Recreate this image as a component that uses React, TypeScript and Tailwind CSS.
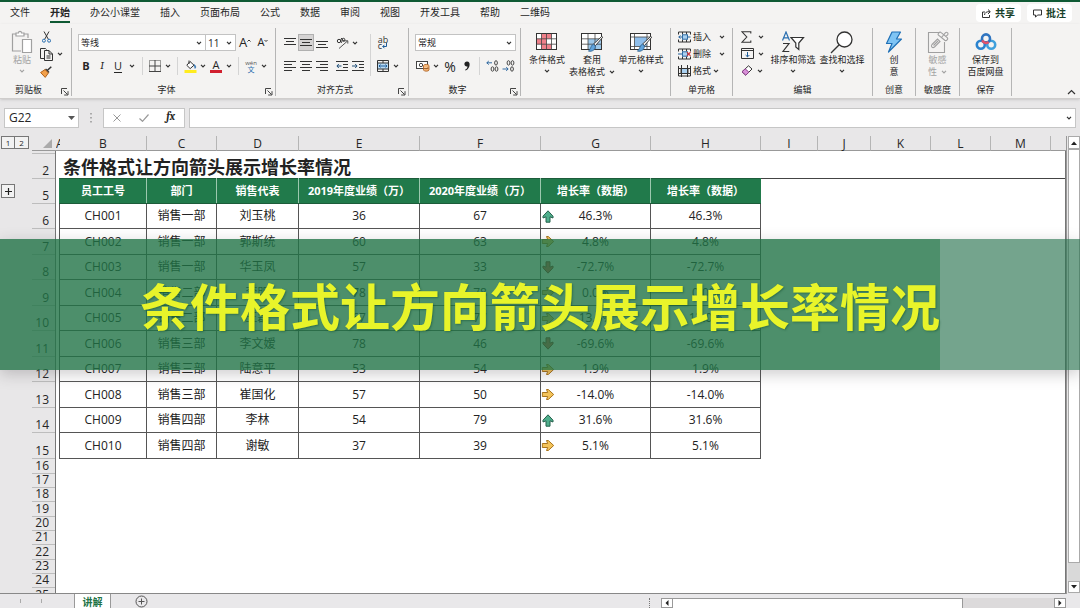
import { useState } from 'react';
import type { ReactNode } from 'react';

type Trend = 'up' | 'flat' | 'down';

interface Sale {
  id: string;
  dept: string;
  name: string;
  y2019: number;
  y2020: number;
  growth: string;
  trend: Trend;
}

const tabs = ['文件', '开始', '办公小课堂', '插入', '页面布局', '公式', '数据', '审阅', '视图', '开发工具', '帮助', '二维码'];

const sales: Sale[] = [
  { id: 'CH001', dept: '销售一部', name: '刘玉桃', y2019: 36, y2020: 67, growth: '46.3%', trend: 'up' },
  { id: 'CH002', dept: '销售一部', name: '郭斯统', y2019: 60, y2020: 63, growth: '4.8%', trend: 'flat' },
  { id: 'CH003', dept: '销售一部', name: '华玉凤', y2019: 57, y2020: 33, growth: '-72.7%', trend: 'down' },
  { id: 'CH004', dept: '销售二部', name: '李明', y2019: 78, y2020: 78, growth: '0.0%', trend: 'flat' },
  { id: 'CH005', dept: '销售二部', name: '王磊', y2019: 67, y2020: 77, growth: '13.0%', trend: 'flat' },
  { id: 'CH006', dept: '销售三部', name: '李文嫒', y2019: 78, y2020: 46, growth: '-69.6%', trend: 'down' },
  { id: 'CH007', dept: '销售三部', name: '陆意平', y2019: 53, y2020: 54, growth: '1.9%', trend: 'flat' },
  { id: 'CH008', dept: '销售三部', name: '崔国化', y2019: 57, y2020: 50, growth: '-14.0%', trend: 'flat' },
  { id: 'CH009', dept: '销售四部', name: '李林', y2019: 54, y2020: 79, growth: '31.6%', trend: 'up' },
  { id: 'CH010', dept: '销售四部', name: '谢敏', y2019: 37, y2020: 39, growth: '5.1%', trend: 'flat' },
];

const headings = ['员工工号', '部门', '销售代表', '2019年度业绩（万）', '2020年度业绩（万）', '增长率（数据）', '增长率（数据）'];

const columns = [
  { name: 'B', width: 'w-[87px]' },
  { name: 'C', width: 'w-[70px]' },
  { name: 'D', width: 'w-[82px]' },
  { name: 'E', width: 'w-[121px]' },
  { name: 'F', width: 'w-[121px]' },
  { name: 'G', width: 'w-[110px]' },
  { name: 'H', width: 'w-[110px]' },
  { name: 'I', width: 'w-[57px]' },
  { name: 'J', width: 'w-[53px]' },
  { name: 'K', width: 'w-[60px]' },
  { name: 'L', width: 'w-[60px]' },
  { name: 'M', width: 'w-[60px]' },
];

const tallRows = [6, 7, 8, 9, 10, 11, 12, 13, 14, 15];
const shortRows = [16, 17, 18, 19, 20, 21, 22, 23, 24, 25];

function Caret({ light = false }: { light?: boolean }) {
  return (
    <svg width="6" height="4" viewBox="0 0 6 4" fill="none" stroke={light ? '#a3a3a3' : '#333'} strokeWidth="1.2" className="shrink-0">
      <path d="M1 0.8 3 2.9 5 0.8" />
    </svg>
  );
}

function Launcher() {
  return (
    <svg width="8" height="8" viewBox="0 0 8 8" fill="none" stroke="#444" strokeWidth="1">
      <path d="M0.5 6V0.5H6M2.5 2.5 6.5 6.5M7 3.2V7H3.2" />
    </svg>
  );
}

function Group({ label, width, launcher = false, children }: { label: string; width: string; launcher?: boolean; children: ReactNode }) {
  return (
    <section aria-label={label} className={`${width} relative flex shrink-0 flex-col border-r border-[#b5b5b5]`}>
      <div className="flex h-14">{children}</div>
      <div className={`text-center text-[9px] leading-3 ${launcher ? 'pr-3.5' : ''}`}>{label}</div>
      {launcher && (
        <button aria-label={`${label}设置`} className="absolute right-0.5 bottom-0">
          <Launcher />
        </button>
      )}
    </section>
  );
}

function Tool({ label, className = '', children }: { label: string; className?: string; children: ReactNode }) {
  return (
    <button aria-label={label} className={`flex h-full shrink-0 items-center justify-center ${className}`}>
      {children}
    </button>
  );
}

function BigTool({ lines, className, caret, muted = false, children }: {
  lines: string[];
  className: string;
  caret?: 'below' | 'inline';
  muted?: boolean;
  children: ReactNode;
}) {
  return (
    <button className={`${className} ${muted ? 'text-[#a3a3a3]' : ''} flex shrink-0 flex-col items-center pt-0.5 text-[9px] leading-3 whitespace-nowrap`}>
      <span className="flex h-6 items-center">{children}</span>
      {lines.map((line, i) => (
        <span key={line} className="flex items-center gap-1">
          {line}
          {caret === 'inline' && i === lines.length - 1 && <Caret light={muted} />}
        </span>
      ))}
      {caret === 'below' && (
        <span className="flex h-2.5 items-center">
          <Caret light={muted} />
        </span>
      )}
    </button>
  );
}

function Divider() {
  return <span className="mx-1 h-full w-px shrink-0 bg-[#d4d4d4]" />;
}

function Lines({ rows }: { rows: [number, number, number][] }) {
  return (
    <svg width="12" height="12" viewBox="0 0 12 12" stroke="#333" strokeWidth="1">
      {rows.map(([x1, x2, y]) => (
        <path key={y} d={`M${x1} ${y}H${x2}`} />
      ))}
    </svg>
  );
}

function IndentIcon({ out = false }: { out?: boolean }) {
  return (
    <svg width="12" height="12" viewBox="0 0 12 12" fill="none" stroke="#333" strokeWidth="1">
      <path d="M0 1.5H12M7 4.5H12M7 7.5H12M0 10.5H12" />
      <path d={out ? 'M5.5 6H1M2.8 4 0.9 6 2.8 8' : 'M0 6H5M3.2 4 5.1 6 3.2 8'} stroke="#1e4e79" />
    </svg>
  );
}

function GridIcon({ kind }: { kind: 'cond' | 'table' | 'cell' }) {
  return (
    <svg width="24" height="22" viewBox="0 0 24 22" fill="none">
      <rect x="1.5" y="2.5" width="20" height="16" fill="#fff" />
      {kind === 'cond' && <path d="M6.5 2.5H16.5V7.8H6.5ZM1.5 7.8H11.5V13.2H1.5ZM11.5 13.2H16.5V18.5H6.5V13.2Z" fill="#f0808a" />}
      {kind === 'table' && <path d="M8 8H21.5V18.5H8Z" fill="#9cc8ea" />}
      {kind === 'cell' && <path d="M5.5 6H18V15.5H5.5Z" fill="#8fbfec" />}
      <rect x="1.5" y="2.5" width="20" height="16" stroke="#333" />
      {kind === 'cond' && <path d="M6.5 2.5V18.5M11.5 2.5V18.5M16.5 2.5V18.5M1.5 7.8H21.5M1.5 13.2H21.5" stroke="#444" strokeWidth="0.8" />}
      {kind === 'table' && <path d="M8 2.5V18.5M15 2.5V18.5M1.5 7.8H21.5M1.5 13.2H21.5" stroke="#444" strokeWidth="0.8" />}
      {kind === 'cell' && <path d="M5.5 2.5V18.5M18 2.5V18.5M1.5 6H21.5M1.5 15.5H21.5" stroke="#444" strokeWidth="0.8" />}
      {kind !== 'cond' && (
        <>
          <path d="M22.8 6.2 15.5 14.6 13.6 13 21.6 5.5Z" fill="#f4f3f2" stroke="#333" strokeWidth="0.9" />
          <path d="M13.4 13.2C11.2 13.6 11.4 17 8.5 20.2 12 21 15.6 18.6 15.4 14.9Z" fill="#5fa3dc" stroke="#2f5f8a" strokeWidth="0.8" />
        </>
      )}
    </svg>
  );
}

function CellsIcon({ kind }: { kind: 'insert' | 'delete' | 'format' }) {
  return (
    <svg width="13" height="12" viewBox="0 0 13 12" fill="none" stroke="#333" strokeWidth="1">
      {kind === 'format' ? (
        <>
          <rect x="3" y="3.5" width="7" height="5" fill="#a9d0f0" />
          <path d="M0.5 1V11H12.5V1M3.5 0V12M9.5 0V12M0.5 3.5H12.5M0.5 8.5H12.5" />
        </>
      ) : (
        <>
          <path d="M0.5 3.5V1H12.5V3.5M0.5 8.5V11H12.5V8.5M4.5 1V3.5M8.5 1V3.5M4.5 8.5V11M8.5 8.5V11" />
          <rect x="4.5" y="3.8" width="5" height="4.4" fill="#a9d0f0" stroke="#2f6ca5" />
          {kind === 'insert' && <path d="M4 6H0.8M2.4 4.4 0.8 6 2.4 7.6M10 6H12.5" stroke="#1e5c99" />}
          {kind === 'delete' && <path d="M0 6H4" stroke="#1e5c99" />}
          {kind === 'delete' && <path d="M9 4.2 12.5 7.8M12.5 4.2 9 7.8" stroke="#d13438" strokeWidth="1.2" />}
        </>
      )}
    </svg>
  );
}

function DecimalIcon({ more = false }: { more?: boolean }) {
  return (
    <svg width="13" height="12" viewBox="0 0 13 12" fill="none" strokeWidth="0.9">
      {more ? (
        <>
          <path d="M6 2.8H0.8M2.8 1 0.8 2.8 2.8 4.6" stroke="#1e5c99" />
          <g stroke="#333">
            <ellipse cx="10" cy="2.9" rx="1.4" ry="2.2" />
            <ellipse cx="6.5" cy="9" rx="1.4" ry="2.2" />
            <ellipse cx="10.5" cy="9" rx="1.4" ry="2.2" />
          </g>
        </>
      ) : (
        <>
          <path d="M0.5 9H6M4.2 7.2 6.2 9 4.2 10.8" stroke="#1e5c99" />
          <g stroke="#333">
            <ellipse cx="6.5" cy="2.9" rx="1.4" ry="2.2" />
            <ellipse cx="10.5" cy="2.9" rx="1.4" ry="2.2" />
            <ellipse cx="10" cy="9" rx="1.4" ry="2.2" />
          </g>
        </>
      )}
    </svg>
  );
}

function TrendIcon({ trend }: { trend: Trend }) {
  const look = {
    up: { fill: '#4fae8c', stroke: '#24614c', turn: '' },
    flat: { fill: '#f3c35a', stroke: '#a9741c', turn: 'rotate-90' },
    down: { fill: '#d9534a', stroke: '#7d2b22', turn: 'rotate-180' },
  }[trend];
  return (
    <svg width="12" height="13" viewBox="0 0 12 13" className={look.turn}>
      <path d="M6 0.8 11 6.2V8L8 6.8V12.2H4V6.8L1 8V6.2Z" fill={look.fill} stroke={look.stroke} strokeWidth="1" strokeLinejoin="round" />
    </svg>
  );
}

function ClipboardGroup() {
  return (
    <Group label="剪贴板" width="w-[72px]" launcher>
      <BigTool lines={['粘贴']} className="ml-1.5 w-8" caret="below" muted>
        <svg width="22" height="24" viewBox="0 0 22 24" fill="none" stroke="#a0a0a0" strokeWidth="1.2">
          <path d="M10 21H1.5V4H5M13 4H17V8" />
          <path d="M5 6V3H7.5C7.5 0.8 10.5 0.8 10.5 3H13V6Z" fill="#fff" />
          <path d="M11.5 9.5H20.5V22.5H11.5Z" fill="#fff" />
        </svg>
      </BigTool>
      <div className="flex flex-col">
        <div className="flex h-[17px]">
          <Tool label="剪切" className="w-4">
            <svg width="9" height="12" viewBox="0 0 9 12" fill="none" strokeWidth="1">
              <path d="M2 0.5 6.2 8M7 0.5 2.8 8" stroke="#333" />
              <circle cx="1.9" cy="9.7" r="1.5" stroke="#2a6fb0" />
              <circle cx="7.1" cy="9.7" r="1.5" stroke="#2a6fb0" />
            </svg>
          </Tool>
        </div>
        <div className="flex h-[18px]">
          <Tool label="复制" className="w-4">
            <svg width="13" height="13" viewBox="0 0 13 13" fill="none" stroke="#333" strokeWidth="1">
              <path d="M4 10.5H0.5V0.5H5.5L6.5 1.5" />
              <path d="M4.5 2.5H9L12.5 6V12.5H4.5ZM9 2.5V6H12.5M6.5 8H10.5M6.5 10H10.5" />
            </svg>
          </Tool>
          <Tool label="复制选项" className="w-3">
            <Caret />
          </Tool>
        </div>
        <div className="flex h-[17px]">
          <Tool label="格式刷" className="w-4">
            <svg width="12" height="12" viewBox="0 0 12 12" fill="none" strokeWidth="1">
              <path d="M11.3 0.7 7.5 4.2M5.5 3 9 6.5" stroke="#333" strokeWidth="1.5" />
              <path d="M5 3.6 0.6 6.5 5.2 11.4 8.4 7Z" fill="#f2a04a" stroke="#b3621b" />
            </svg>
          </Tool>
        </div>
      </div>
    </Group>
  );
}

function FontGroup() {
  return (
    <Group label="字体" width="w-[204px]" launcher>
      <div className="flex flex-col gap-1.5 pt-1.5 pl-1.5">
        <div className="flex h-[17px] items-center">
          <div className="relative h-full">
            <select aria-label="字体名称" className="block h-full w-32 appearance-none border border-[#c3c3c3] bg-white pl-0.5 text-[9px] leading-3">
              <option>等线</option>
            </select>
            <span className="pointer-events-none absolute inset-y-0 right-1 flex items-center"><Caret /></span>
          </div>
          <div className="relative h-full">
            <select aria-label="字号" className="block h-full w-[30px] appearance-none border border-l-0 border-[#c3c3c3] bg-white pl-0.5 text-[10px] leading-3">
              <option>11</option>
            </select>
            <span className="pointer-events-none absolute inset-y-0 right-1 flex items-center"><Caret /></span>
          </div>
          <Tool label="增大字号" className="w-[18px] text-[13px]">
            A
            <svg width="4" height="8" viewBox="0 0 4 8" fill="none" stroke="#333"><path d="M0.5 2.5 2 1 3.5 2.5" /></svg>
          </Tool>
          <Tool label="减小字号" className="w-[18px] text-[11px]">
            A
            <svg width="4" height="8" viewBox="0 0 4 8" fill="none" stroke="#333"><path d="M0.5 1 2 2.5 3.5 1" /></svg>
          </Tool>
        </div>
        <div className="flex h-[18px] items-center text-[11px]">
          <Tool label="加粗" className="w-4 font-bold">B</Tool>
          <Tool label="倾斜" className="w-4 font-serif italic">I</Tool>
          <Tool label="下划线" className="w-4 underline underline-offset-2">U</Tool>
          <Tool label="下划线选项" className="w-3"><Caret /></Tool>
          <Divider />
          <Tool label="边框" className="w-4">
            <svg width="12" height="12" viewBox="0 0 12 12" fill="none" stroke="#444">
              <path d="M0.5 0.5H11.5V11.5H0.5Z" strokeDasharray="1 1" />
              <path d="M6 0V12M0 6H12M0 11.5H12" />
            </svg>
          </Tool>
          <Tool label="边框选项" className="w-2.5"><Caret /></Tool>
          <Divider />
          <Tool label="填充颜色" className="w-4">
            <svg width="13" height="13" viewBox="0 0 13 13" fill="none">
              <path d="M6 1.5 10 5.2 6.2 8.6 2.8 5.3Z" fill="#fff" stroke="#333" />
              <path d="M5 0.5V4" stroke="#333" />
              <path d="M10.3 4.5C12 6 12 7.6 11 8.4Z" fill="#2a6fb0" stroke="#2a6fb0" strokeWidth="0.7" />
              <rect x="0.5" y="10" width="12" height="3" fill="#ffec1f" />
            </svg>
          </Tool>
          <Tool label="填充颜色选项" className="w-2.5"><Caret /></Tool>
          <Tool label="字体颜色" className="w-4">
            <span className="flex w-3 flex-col items-center text-[11px] leading-[10px]">
              A
              <span className="h-[3px] w-3 bg-[#d1202f]" />
            </span>
          </Tool>
          <Tool label="字体颜色选项" className="w-2.5"><Caret /></Tool>
          <Divider />
          <Tool label="拼音" className="w-4">
            <span className="flex flex-col items-center text-[6px] leading-[6px] text-[#555]">
              wén
              <span className="text-[7px] leading-[7px] text-[#2a6fb0]">文</span>
            </span>
          </Tool>
          <Tool label="拼音选项" className="w-2.5"><Caret /></Tool>
        </div>
      </div>
    </Group>
  );
}

function AlignGroup() {
  return (
    <Group label="对齐方式" width="w-[133px]" launcher>
      <div className="flex flex-col gap-1.5 pt-1.5 pl-1.5">
        <div className="flex h-[17px] items-center">
          <Tool label="顶端对齐" className="w-4"><Lines rows={[[0, 12, 1.5], [2, 10, 4.5], [0, 12, 7.5]]} /></Tool>
          <Tool label="垂直居中" className="w-4 border border-[#b0b0b0] bg-[#d5d3d3]"><Lines rows={[[0, 12, 2.5], [2, 10, 5.5], [0, 12, 8.5]]} /></Tool>
          <Tool label="底端对齐" className="w-4"><Lines rows={[[0, 12, 4.5], [2, 10, 7.5], [0, 12, 10.5]]} /></Tool>
          <Tool label="方向" className="ml-1 w-4">
            <svg width="13" height="12" viewBox="0 0 13 12" fill="none" stroke="#333">
              <circle cx="3" cy="4" r="1.7" />
              <path d="M4.2 2.4 5.6 5.8M5 1 8.2 4.5" />
              <circle cx="7.4" cy="2.8" r="1.5" />
              <path d="M3 11.5 11.5 4M8.8 3.8H11.8V6.6" stroke="#555" />
            </svg>
          </Tool>
          <Tool label="方向选项" className="w-2.5"><Caret /></Tool>
        </div>
        <div className="flex h-[18px] items-center">
          <Tool label="左对齐" className="w-4"><Lines rows={[[0, 12, 1.5], [0, 8, 4.5], [0, 12, 7.5], [0, 8, 10.5]]} /></Tool>
          <Tool label="居中" className="w-4"><Lines rows={[[0, 12, 1.5], [2, 10, 4.5], [0, 12, 7.5], [2, 10, 10.5]]} /></Tool>
          <Tool label="右对齐" className="w-4"><Lines rows={[[0, 12, 1.5], [4, 12, 4.5], [0, 12, 7.5], [4, 12, 10.5]]} /></Tool>
          <Tool label="减少缩进量" className="ml-1 w-4"><IndentIcon out /></Tool>
          <Tool label="增加缩进量" className="w-4"><IndentIcon /></Tool>
        </div>
      </div>
      <div className="flex pt-1.5 pb-2">
        <Divider />
      </div>
      <div className="flex flex-col gap-1.5 pt-1.5">
        <div className="flex h-[17px] items-center">
          <Tool label="自动换行" className="w-4">
            <span className="flex flex-col items-start text-[9px] leading-[6px] text-[#333]">
              ab
              <span className="flex items-center">
                c
                <svg width="6" height="6" viewBox="0 0 6 6" fill="none" stroke="#1e5c99"><path d="M4.5 0V3.5H0.8M2.4 1.8 0.8 3.5 2.4 5.2" /></svg>
              </span>
            </span>
          </Tool>
        </div>
        <div className="flex h-[18px] items-center">
          <Tool label="合并后居中" className="w-4">
            <svg width="12" height="12" viewBox="0 0 12 12" fill="none" stroke="#333">
              <path d="M0.5 0.5H11.5V11.5H0.5ZM6 0.5V3M6 9V11.5" />
              <path d="M0.5 3H11.5V9H0.5Z" fill="#b9dbf5" />
              <path d="M2 6H10M3.5 4.6 2 6 3.5 7.4M8.5 4.6 10 6 8.5 7.4" stroke="#1e5c99" />
            </svg>
          </Tool>
          <Tool label="合并选项" className="w-2.5"><Caret /></Tool>
        </div>
      </div>
    </Group>
  );
}

function NumberGroup() {
  return (
    <Group label="数字" width="w-[112px]" launcher>
      <div className="flex flex-col gap-1.5 pt-1.5 pl-1.5">
        <div className="relative h-[17px]">
          <select aria-label="数字格式" className="block h-full w-[101px] appearance-none border border-[#c3c3c3] bg-white pl-0.5 text-[9px] leading-3">
            <option>常规</option>
          </select>
          <span className="pointer-events-none absolute inset-y-0 right-1 flex items-center"><Caret /></span>
        </div>
        <div className="flex h-[18px] items-center">
          <Tool label="会计数字格式" className="w-4">
            <svg width="14" height="12" viewBox="0 0 14 12" fill="none">
              <rect x="0.5" y="1.5" width="11" height="7" fill="#fff" stroke="#444" />
              <circle cx="5" cy="5" r="1.7" stroke="#444" />
              <path d="M7.5 5.5C7.5 4 13 4 13 5.5V10C13 11.6 7.5 11.6 7.5 10ZM7.5 7.8C8 9 12.5 9 13 7.8" fill="#f6b878" stroke="#a8591a" strokeWidth="0.8" />
            </svg>
          </Tool>
          <Tool label="会计数字格式选项" className="w-2.5"><Caret /></Tool>
          <Tool label="百分比样式" className="w-[18px] text-[14px]">%</Tool>
          <Tool label="千位分隔样式" className="w-4">
            <svg width="6" height="10" viewBox="0 0 6 10" fill="#222"><path d="M3 0.5C5 0.5 5.8 2 5.6 4 5.4 6.5 4 8.6 1.5 9.6L1 8.8C2.6 8 3.4 6.8 3.5 5.4 1.8 5.8 0.4 4.7 0.4 3 0.4 1.5 1.5 0.5 3 0.5Z" /></svg>
          </Tool>
          <Divider />
          <Tool label="增加小数位数" className="w-4"><DecimalIcon more /></Tool>
          <Tool label="减少小数位数" className="w-4"><DecimalIcon /></Tool>
        </div>
      </div>
    </Group>
  );
}

function Ribbon() {
  return (
    <div className="flex h-[75px] shrink-0 border-b border-[#cfcdcc] bg-[#f4f3f2] pt-1 pb-0.5 shadow-sm">
      <ClipboardGroup />
      <FontGroup />
      <AlignGroup />
      <NumberGroup />
      <Group label="样式" width="w-[150px]">
        <BigTool lines={['条件格式']} className="ml-1 w-11" caret="below"><GridIcon kind="cond" /></BigTool>
        <BigTool lines={['套用', '表格格式']} className="w-[46px]" caret="inline"><GridIcon kind="table" /></BigTool>
        <BigTool lines={['单元格样式']} className="w-[52px]" caret="below"><GridIcon kind="cell" /></BigTool>
      </Group>
      <Group label="单元格" width="w-[62px]">
        <div className="flex flex-col pl-[7px] text-[9px] leading-3">
          <button className="flex h-[17px] items-center gap-0.5"><CellsIcon kind="insert" />插入<span className="pl-1.5"><Caret /></span></button>
          <button className="flex h-[17px] items-center gap-0.5"><CellsIcon kind="delete" />删除<span className="pl-1.5"><Caret /></span></button>
          <button className="flex h-[17px] items-center gap-0.5"><CellsIcon kind="format" />格式<Caret /></button>
        </div>
      </Group>
      <Group label="编辑" width="w-[140px]">
        <div className="flex w-9 flex-col pl-2">
          <button aria-label="自动求和" className="flex h-[17px] items-center gap-1.5">
            <svg width="11" height="12" viewBox="0 0 11 12" fill="none" stroke="#333" strokeWidth="1.1"><path d="M9.8 2.6V0.8H1L5.8 6 1 11.2H9.8V9.4" /></svg>
            <Caret />
          </button>
          <button aria-label="填充" className="flex h-[17px] items-center gap-1">
            <svg width="13" height="11" viewBox="0 0 13 11" fill="none" stroke="#333">
              <path d="M0.5 0.5H12.5V10.5H0.5ZM0.5 2.5H12.5" />
              <path d="M6.5 4V8.8M4.6 7 6.5 8.9 8.4 7" stroke="#1e5c99" />
            </svg>
            <Caret />
          </button>
          <button aria-label="清除" className="flex h-[17px] items-center gap-1">
            <svg width="12" height="11" viewBox="0 0 12 11" fill="none" stroke="#333">
              <path d="M7.5 0.8 11 4 4.8 10.2 1 6.8Z" fill="#fff" />
              <path d="M4.2 3.8 7.9 7.2 4.8 10.2 1 6.8Z" fill="#d890d8" stroke="#8b3f8b" />
            </svg>
            <Caret />
          </button>
        </div>
        <BigTool lines={['排序和筛选']} className="w-12" caret="below">
          <svg width="24" height="22" viewBox="0 0 24 22" fill="none" strokeWidth="1.2">
            <path d="M1.5 9.5 5 1 8.5 9.5M2.7 6.8H7.3" stroke="#2a6fb0" />
            <path d="M2 12.5H8L2 20.5H8.3" stroke="#333" />
            <path d="M10 6.5H22.5L17.8 12V18.5L14.8 16V12Z" fill="#fff" stroke="#333" />
          </svg>
        </BigTool>
        <BigTool lines={['查找和选择']} className="w-[50px]" caret="below">
          <svg width="24" height="23" viewBox="0 0 24 23" fill="none" stroke="#333" strokeWidth="1.3">
            <circle cx="14.5" cy="8.5" r="7.5" fill="#fff" />
            <path d="M9.2 13.8 1 22" />
          </svg>
        </BigTool>
      </Group>
      <Group label="创意" width="w-[43px]">
        <BigTool lines={['创', '意']} className="w-full">
          <svg width="18" height="22" viewBox="0 0 18 22" fill="#7fc4f4" stroke="#1f6fb5" strokeWidth="1.2" strokeLinejoin="round">
            <path d="M7 1H15.5L11.5 8H16.5L3.5 21 7 12.5H1.5Z" />
          </svg>
        </BigTool>
      </Group>
      <Group label="敏感度" width="w-[44px]">
        <BigTool lines={['敏感', '性']} className="w-full" caret="inline" muted>
          <svg width="22" height="22" viewBox="0 0 22 22" fill="none" stroke="#a0a0a0" strokeWidth="1.1">
            <path d="M12 1.5H1.5V21.5H17.5V11" />
            <path d="M5 13.5 10.5 8 13 10.5 7.5 16C5.5 17.5 3.5 15.5 5 13.5ZM6.5 14.5 11 10" />
            <path d="M11.5 4.2C10.3 2.8 12.6 0.2 14.2 1.6L20.2 6.6C21.6 8.2 19.4 10.4 17.8 9.2ZM14.5 6.5 18.3 1.8C19.6 0.4 21.8 2 20.6 3.8L18.8 5.4" />
          </svg>
        </BigTool>
      </Group>
      <Group label="保存" width="w-[52px]">
        <BigTool lines={['保存到', '百度网盘']} className="w-full">
          <svg width="22" height="20" viewBox="0 0 22 20" fill="none" strokeWidth="2.6">
            <circle cx="5.8" cy="12.8" r="4" stroke="#2a83cf" />
            <circle cx="16.2" cy="12.8" r="4" stroke="#3fa0dc" />
            <circle cx="11" cy="6.4" r="4" stroke="#2f74c0" />
            <path d="M7.2 8.4C8.6 10.8 11.4 12 13.6 9.8" stroke="#e2536a" />
          </svg>
        </BigTool>
      </Group>
      <div className="flex flex-1 items-end justify-end pr-1 pb-px">
        <button aria-label="折叠功能区">
          <svg width="9" height="6" viewBox="0 0 9 6" fill="none" stroke="#333" strokeWidth="1.2"><path d="M1 5 4.5 1.5 8 5" /></svg>
        </button>
      </div>
    </div>
  );
}

function TabBar() {
  const [active, setActive] = useState('开始');
  return (
    <nav className="flex h-[24px] shrink-0 items-center border-t-2 border-[#0f5a34] bg-[#f4f3f2] pr-2 pl-2.5">
      <div className="flex flex-1 gap-5 text-[10px]">
        {tabs.map((tab) => (
          <button
            key={tab}
            onClick={() => setActive(tab)}
            className={`border-b-2 leading-[18px] whitespace-nowrap ${tab === active ? 'border-[#0f5a34] font-bold' : 'border-transparent'}`}
          >
            {tab}
          </button>
        ))}
      </div>
      <div className="flex gap-1.5 text-[10px] font-bold text-[#173f2a]">
        <button className="flex h-[18px] items-center gap-1 rounded-sm bg-white px-1.5">
          <svg width="9" height="9" viewBox="0 0 9 9" fill="none" stroke="#333"><path d="M3 3H0.5V8.5H7.5V6M2.5 6C2.8 3.5 4.5 2.5 8 2.7M6 0.5 8.3 2.7 6 5" /></svg>
          共享
        </button>
        <button className="flex h-[18px] items-center gap-1 rounded-sm bg-white px-1.5">
          <svg width="9" height="9" viewBox="0 0 9 9" fill="none" stroke="#333"><path d="M0.5 1H8.5V6H4.5L2.5 8.2V6H0.5Z" /></svg>
          批注
        </button>
      </div>
    </nav>
  );
}

function FormulaBar() {
  return (
    <div className="flex h-[37px] shrink-0 items-center pr-1 pl-1 text-xs">
      <div className="relative">
        <input aria-label="名称框" defaultValue="G22" className="block h-5 w-[75px] border border-[#c6c6c6] bg-white pl-1 text-xs" />
        <svg width="7" height="4" viewBox="0 0 7 4" className="pointer-events-none absolute top-2 right-1"><path d="M0 0H7L3.5 4Z" fill="#555" /></svg>
      </div>
      <svg width="2" height="10" viewBox="0 0 2 10" className="mx-[11px]" fill="#aaa">
        <path d="M0 0H2V1.5H0ZM0 4H2V5.5H0ZM0 8H2V9.5H0Z" />
      </svg>
      <div className="flex h-5 w-[82px] items-center justify-around border border-[#c6c6c6] bg-white">
        <button aria-label="取消">
          <svg width="8" height="8" viewBox="0 0 8 8" stroke="#999"><path d="M0.5 0.5 7.5 7.5M7.5 0.5 0.5 7.5" /></svg>
        </button>
        <button aria-label="输入">
          <svg width="10" height="8" viewBox="0 0 10 8" fill="none" stroke="#999" strokeWidth="1.2"><path d="M0.5 4.5 3.5 7.3 9.5 0.5" /></svg>
        </button>
        <button aria-label="插入函数" className="font-serif text-[11px] font-bold italic">fx</button>
      </div>
      <div className="relative ml-1 flex-1">
        <input aria-label="编辑栏" className="block h-5 w-full border border-[#c6c6c6] bg-white px-1" />
        <span className="pointer-events-none absolute inset-y-0 right-1 flex items-center"><Caret /></span>
      </div>
    </div>
  );
}

function RowHeaders() {
  const cell = 'flex items-end justify-end border-b border-[#bdbdbd] pr-1.5 text-xs leading-[15px]';
  return (
    <div className="w-6 shrink-0 border-r border-[#777]">
      <div className="h-[3px] border-b border-[#bdbdbd]" />
      <div className={`${cell} h-[25px]`}>2</div>
      <div className={`${cell} h-[25px]`}>5</div>
      {tallRows.map((n) => (
        <div key={n} className={`${cell} h-[26px] even:h-[25px]`}>{n}</div>
      ))}
      <div>
        {shortRows.map((n) => (
          <div key={n} className={`${cell} h-[14px] [&:nth-child(3n+1)]:h-[15px]`}>{n}</div>
        ))}
      </div>
    </div>
  );
}

function SalesTable() {
  return (
    <table className="w-[702px] table-fixed border-collapse text-center text-xs leading-4">
      <colgroup>
        {columns.slice(0, 7).map((col) => (
          <col key={col.name} className={col.width} />
        ))}
      </colgroup>
      <thead>
        <tr className="h-[25px] bg-[#217a4b] text-[11px] text-white">
          {headings.map((text, i) => (
            <th key={i} className="border border-x-[#9cc8ae] border-y-[#1d5c3a] p-0 font-bold whitespace-nowrap first:border-l-[#217a4b] last:border-r-[#217a4b]">
              {text}
            </th>
          ))}
        </tr>
      </thead>
      <tbody className="text-[#222] [&_td]:border [&_td]:border-[#555] [&_td]:p-0">
        {sales.map((row) => (
          <tr key={row.id} className="h-[25px] even:h-[26px]">
            <td>{row.id}</td>
            <td>{row.dept}</td>
            <td>{row.name}</td>
            <td>{row.y2019}</td>
            <td>{row.y2020}</td>
            <td className="relative">
              <span className="absolute top-1.5 left-px"><TrendIcon trend={row.trend} /></span>
              {row.growth}
            </td>
            <td>{row.growth}</td>
          </tr>
        ))}
      </tbody>
    </table>
  );
}

function ScrollArrow({ direction }: { direction: 'up' | 'down' | 'left' | 'right' }) {
  const paths = { up: 'M0 5 3 1.5 6 5Z', down: 'M0 1 3 4.5 6 1Z', left: 'M4.5 0V6L1.5 3Z', right: 'M1.5 0V6L4.5 3Z' };
  return (
    <svg width="6" height="6" viewBox="0 0 6 6" fill="#222"><path d={paths[direction]} /></svg>
  );
}

function Sheet() {
  return (
    <div className="flex min-h-0 flex-1">
      <div className="flex min-w-0 flex-1 flex-col">
        <div className="flex h-[15px] shrink-0 text-xs leading-[15px]">
          <div className="flex w-8 shrink-0 items-start pl-px text-[8px] leading-[11px]">
            <button className="h-[13px] w-[14px] border border-[#777] bg-[#f2f2f2]">1</button>
            <button className="h-[13px] w-[14px] border border-l-0 border-[#777] bg-[#f2f2f2]">2</button>
          </div>
          <div className="flex w-6 shrink-0 items-center justify-end border-b border-[#999] pr-1">
            <svg width="9" height="9" viewBox="0 0 9 9"><path d="M9 0V9H0Z" fill="#aaa" /></svg>
          </div>
          <div className="w-1 shrink-0 overflow-hidden border-b border-[#999]">A</div>
          {columns.map((col) => (
            <div key={col.name} className={`${col.width} shrink-0 border-r border-b border-r-[#b5b5b5] border-b-[#999] text-center`}>{col.name}</div>
          ))}
          <div className="flex-1 border-b border-[#999]" />
        </div>
        <div className="flex min-h-0 flex-1 overflow-hidden border-b border-[#888]">
          <div className="w-8 shrink-0 pt-[33px] pl-px">
            <button aria-label="展开行" className="flex h-[14px] w-[14px] items-center justify-center border border-[#777] bg-[#f2f2f2]">
              <svg width="7" height="7" viewBox="0 0 7 7" stroke="#222" strokeWidth="1.2"><path d="M3.5 0V7M0 3.5H7" /></svg>
            </button>
          </div>
          <RowHeaders />
          <div className="min-w-0 flex-1 border-r border-[#777] bg-white pl-[3px]">
            <h1 className="h-7 border-b border-[#444] pl-1 text-[18px] leading-[33px] font-bold text-[#222]">条件格式让方向箭头展示增长率情况</h1>
            <div className="-mt-px">
              <SalesTable />
            </div>
          </div>
        </div>
      </div>
      <div className="flex w-[14px] shrink-0 flex-col border-l border-[#999] pb-px pl-px">
        <button aria-label="向上滚动" className="flex h-[13px] items-center justify-center border border-[#aaa] bg-white"><ScrollArrow direction="up" /></button>
        <div className="flex-1 bg-[#d9d9d9] pb-[18px]">
          <div className="h-full border border-[#aaa] bg-white" />
        </div>
        <button aria-label="向下滚动" className="flex h-3 items-center justify-center border border-[#aaa] bg-white"><ScrollArrow direction="down" /></button>
      </div>
    </div>
  );
}

function SheetTabs() {
  return (
    <footer className="flex h-[14px] shrink-0 bg-[#e9e8ea]">
      <div className="flex w-[75px] items-center gap-5 border-r border-[#999] pl-5 text-[#aaa]">
        <span className="h-1 w-px bg-[#aaa]" />
        <span className="h-1 w-px bg-[#aaa]" />
      </div>
      <button className="w-9 border-r border-[#999] bg-white text-[10px] leading-4 font-bold text-[#217346]">讲解</button>
      <button aria-label="新工作表" className="ml-6 flex items-center">
        <svg width="13" height="13" viewBox="0 0 13 13" fill="none" stroke="#555"><circle cx="6.5" cy="6.5" r="5.5" /><path d="M6.5 3.5V9.5M3.5 6.5H9.5" /></svg>
      </button>
      <div className="flex-1" />
      <div className="mr-[14px] flex w-[417px] items-end">
        <span className="mr-[11px] h-2.5 border-l border-dotted border-[#777]" />
        <button aria-label="向左滚动" className="flex h-2.5 w-3 items-center justify-center border border-[#999] bg-white"><ScrollArrow direction="left" /></button>
        <div className="h-2.5 flex-1 bg-[#dcdadb] pr-[91px]">
          <div className="h-full border-t border-r border-[#999] bg-white" />
        </div>
        <button aria-label="向右滚动" className="flex h-2.5 w-3 items-center justify-center border border-[#999] bg-white"><ScrollArrow direction="right" /></button>
      </div>
    </footer>
  );
}

export default function App() {
  return (
    <div className="relative flex h-screen flex-col overflow-hidden bg-[#e8e7e8] font-['Open_Sans','Noto_Sans_CJK_SC',sans-serif] text-[#262626]">
      <TabBar />
      <Ribbon />
      <FormulaBar />
      <Sheet />
      <SheetTabs />
      <div className="absolute inset-x-0 top-[239px] flex h-[131px] items-center shadow-[0_4px_14px_rgba(60,50,60,0.25)]">
        <div className="h-full w-[87%] bg-[#217346]/80" />
        <div className="h-full flex-1 bg-[#2a7350]/65" />
        <p className="absolute inset-x-0 pt-1 text-center text-[50px] leading-[70px] font-bold whitespace-nowrap text-[#e8f42a] [text-shadow:1px_1px_2px_rgba(20,80,50,0.5)]">
          条件格式让方向箭头展示增长率情况
        </p>
      </div>
    </div>
  );
}
